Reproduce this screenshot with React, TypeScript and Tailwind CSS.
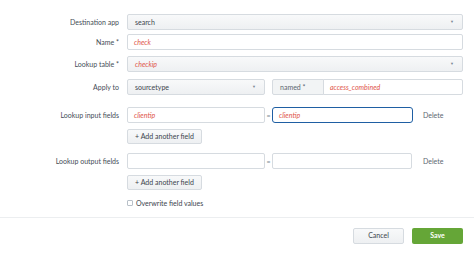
import React from "react";

const Caret = () => (
  <span className="text-[4px] leading-none text-[#7b8592] pr-[8px]">▼</span>
);

function SelectBox({ value, italic, className = "" }: { value: string; italic?: boolean; className?: string }) {
  return (
    <div
      className={`h-[16px] flex items-center justify-between rounded-[2px] border border-[#d6dbe0] bg-gradient-to-b from-[#f8f9fa] to-[#eef0f2] pl-[7px] ${className}`}
    >
      <span className={italic ? "italic text-[#e0554a]" : "text-[#3c444d]"}>{value}</span>
      <Caret />
    </div>
  );
}

function TextBox({ value = "", focused, className = "" }: { value?: string; focused?: boolean; className?: string }) {
  return (
    <div
      className={`h-[16px] flex items-center rounded-[2px] bg-white pl-[6px] ${
        focused ? "border-[1.5px] border-[#1f5fa3] rounded-[3px]" : "border border-[#d6dbe0]"
      } ${className}`}
    >
      <span className="italic text-[#e0554a]">{value}</span>
    </div>
  );
}

function Row({ label, children, className = "" }: { label: string; children: React.ReactNode; className?: string }) {
  return (
    <div className={`flex items-center ${className}`}>
      <div className="w-[120px] pr-[1px] text-right text-[#454d56]">{label}</div>
      <div className="ml-[7px] flex-1 flex items-center">{children}</div>
    </div>
  );
}

function AddButton({ className = "" }: { className?: string }) {
  return (
    <div className={`ml-[127px] w-[75px] h-[15px] flex items-center justify-center rounded-[2px] border border-[#d6dbe0] bg-gradient-to-b from-[#f8f9fa] to-[#eef0f2] text-[#3c444d] ${className}`}>
      + Add another field
    </div>
  );
}

export default function App() {
  return (
    <div
      className="w-[474px] h-[256px] bg-white text-[7px] overflow-hidden"
      style={{ fontFamily: "Lato, 'Liberation Sans', sans-serif" }}
    >
      <div className="pr-[11px] pt-[14px]">
        <Row label="Destination app">
          <SelectBox value="search" className="flex-1" />
        </Row>
        <Row label="Name *" className="mt-[4px]">
          <TextBox value="check" className="flex-1" />
        </Row>
        <Row label="Lookup table *" className="mt-[6px]">
          <SelectBox value="checkip" italic className="flex-1" />
        </Row>
        <Row label="Apply to" className="mt-[7px]">
          <SelectBox value="sourcetype" className="w-[138px]" />
          <div className="ml-[7px] flex-1 flex h-[16px]">
            <div className="w-[52px] flex items-center pl-[7px] rounded-l-[2px] border border-[#d6dbe0] bg-[#f2f4f5] text-[#5c6670]">
              named *
            </div>
            <TextBox value="access_combined" className="flex-1 -ml-[1px] rounded-l-none" />
          </div>
        </Row>
        <Row label="Lookup input fields" className="mt-[12px]">
          <TextBox value="clientip" className="w-[138px]" />
          <span className="w-[7px] text-center text-[#7b8592]">=</span>
          <TextBox value="clientip" focused className="w-[141px]" />
          <span className="ml-[10px] text-[#5c6670]">Delete</span>
        </Row>
        <AddButton className="mt-[6px]" />
        <Row label="Lookup output fields" className="mt-[9px]">
          <TextBox className="w-[138px]" />
          <span className="w-[7px] text-center text-[#7b8592]">=</span>
          <TextBox className="w-[140px]" />
          <span className="ml-[11px] text-[#5c6670]">Delete</span>
        </Row>
        <AddButton className="mt-[6px]" />
        <div className="ml-[127px] mt-[8px] flex items-center gap-[3px] text-[#3c444d]">
          <span className="w-[6px] h-[6px] rounded-[1px] border border-[#b8c0c8] bg-white" />
          <span>Overwrite field values</span>
        </div>
      </div>
      <div className="mt-[8px] border-t border-[#eceef0]" />
      <div className="flex justify-end gap-[8px] pr-[11px] pt-[10px]">
        <div className="w-[51px] h-[16px] flex items-center justify-center rounded-[2px] border border-[#d6dbe0] bg-gradient-to-b from-[#f8f9fa] to-[#eef0f2] text-[#3c444d]">
          Cancel
        </div>
        <div className="w-[51px] h-[16px] flex items-center justify-center rounded-[2px] bg-[#65a637] text-white font-bold">
          Save
        </div>
      </div>
    </div>
  );
}
